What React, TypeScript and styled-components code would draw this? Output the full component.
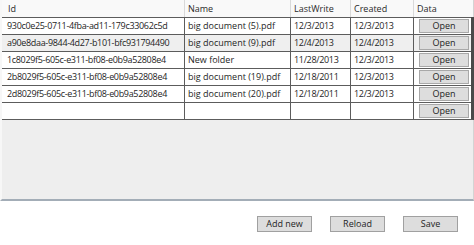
import React from "react";
import styled, {createGlobalStyle} from "styled-components";

const GlobalStyle = createGlobalStyle`
  html, body {
    margin: 0;
    padding: 0;
    background: #ffffff;
  }
  body {
    font-family: "Open Sans", "Noto Sans", "Liberation Sans", sans-serif;
    font-size: 9px;
    color: #1e1e1e;
  }
`;

const COLS = "182px 106px 60px 63px 59px";

interface FileRow {
    id: string;
    name: string;
    lastWrite: string;
    created: string;
}

const rows: FileRow[] = [
    {id: "930c0e25-0711-4fba-ad11-179c33062c5d", name: "big document (5).pdf", lastWrite: "12/3/2013", created: "12/3/2013"},
    {id: "a90e8daa-9844-4d27-b101-bfc931794490", name: "big document (9).pdf", lastWrite: "12/4/2013", created: "12/4/2013"},
    {id: "1c8029f5-605c-e311-bf08-e0b9a52808e4", name: "New folder", lastWrite: "11/28/2013", created: "12/3/2013"},
    {id: "2b8029f5-605c-e311-bf08-e0b9a52808e4", name: "big document (19).pdf", lastWrite: "12/18/2011", created: "12/3/2013"},
    {id: "2d8029f5-605c-e311-bf08-e0b9a52808e4", name: "big document (20).pdf", lastWrite: "12/18/2011", created: "12/3/2013"},
];

const Window = styled.div`
  width: 474px;
  height: 245px;
  display: flex;
  flex-direction: column;
  overflow: hidden;
`;

const Grid = styled.div`
  height: 199px;
  background: #eeeeee;
  border-bottom: 2px solid #a3adb7;
  border-right: 1px solid #d4d4d4;
  border-left: 2px solid #f7f7f7;
  display: flex;
  flex-direction: column;
`;

const Header = styled.div`
  display: grid;
  grid-template-columns: ${COLS};
  height: 17px;
  background: #f9f9f9;
`;

const HeaderCell = styled.div<{$first?: boolean}>`
  padding-left: ${p => p.$first ? "6px" : "3px"};
  line-height: 17px;
  color: #2a2a2a;
  border-left: ${p => p.$first ? "none" : "1px solid #d9d9d9"};
`;

const Body = styled.div`
  width: 469px;
  border-right: 3px solid #4a4a4a;
  border-bottom: 1px solid #5c5c5c;
`;

const Row = styled.div<{$alt?: boolean}>`
  display: grid;
  grid-template-columns: ${COLS};
  height: 16px;
  border-top: 1px solid #5c5c5c;
  background: ${p => p.$alt ? "#efefef" : "#ffffff"};
`;

const Cell = styled.div<{$first?: boolean; $tight?: boolean}>`
  padding-left: ${p => p.$first ? "5px" : "3px"};
  line-height: 16px;
  white-space: nowrap;
  overflow: hidden;
  letter-spacing: ${p => p.$tight ? "-0.33px" : "0"};
  border-left: ${p => p.$first ? "none" : "1px solid #5c5c5c"};
`;

const ButtonCell = styled(Cell)`
  padding: 1px 3px 1px 5px;
  display: flex;
`;

const OpenButton = styled.button`
  flex: 1;
  height: 14px;
  padding: 0;
  font: inherit;
  color: #1e1e1e;
  background: #dddddd;
  border: 1px solid #a8a8a8;
  line-height: 12px;
`;

const Footer = styled.div`
  flex: 1;
  display: flex;
  justify-content: flex-end;
  align-items: flex-start;
  gap: 18px;
  padding: 15px 16px 0 0;
`;

const ActionButton = styled.button`
  width: 55px;
  height: 16px;
  padding: 0;
  font: inherit;
  color: #1e1e1e;
  background: #dddddd;
  border: 1px solid #a0a0a0;
  line-height: 14px;
`;

export default function App() {
    return (
        <Window>
            <GlobalStyle />
            <Grid>
                <Header>
                    <HeaderCell $first>Id</HeaderCell>
                    <HeaderCell>Name</HeaderCell>
                    <HeaderCell>LastWrite</HeaderCell>
                    <HeaderCell>Created</HeaderCell>
                    <HeaderCell>Data</HeaderCell>
                </Header>
                <Body>
                    {rows.map((r, i) => (
                        <Row key={r.id} $alt={i === 1}>
                            <Cell $first $tight>{r.id}</Cell>
                            <Cell>{r.name}</Cell>
                            <Cell $tight>{r.lastWrite}</Cell>
                            <Cell $tight>{r.created}</Cell>
                            <ButtonCell><OpenButton>Open</OpenButton></ButtonCell>
                        </Row>
                    ))}
                    <Row>
                        <Cell $first />
                        <Cell />
                        <Cell />
                        <Cell />
                        <ButtonCell><OpenButton>Open</OpenButton></ButtonCell>
                    </Row>
                </Body>
            </Grid>
            <Footer>
                <ActionButton>Add new</ActionButton>
                <ActionButton>Reload</ActionButton>
                <ActionButton>Save</ActionButton>
            </Footer>
        </Window>
    );
}
